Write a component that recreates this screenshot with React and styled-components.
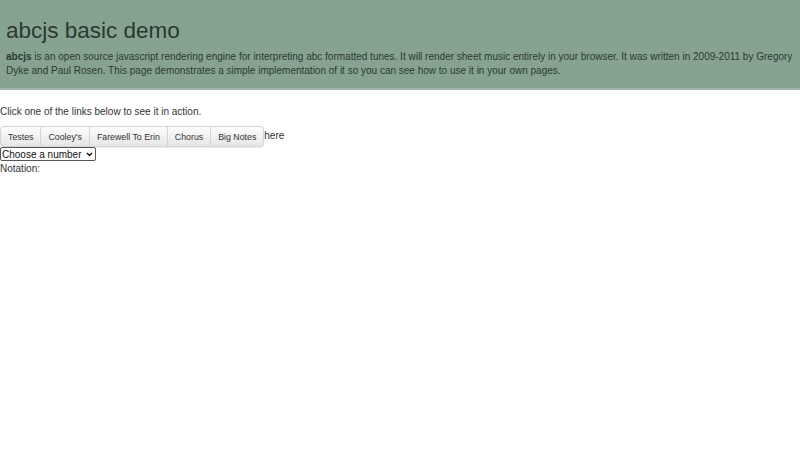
import React from "react";
import styled, { createGlobalStyle } from "styled-components";

const Global = createGlobalStyle`
  html, body { margin: 0; padding: 0; background: #fff; }
  body { font-family: "Liberation Sans", Arial, sans-serif; font-size: 10px; color: #333; }
`;

const Header = styled.header`
  background: #86a391;
  border-bottom: 2px solid #a3b8aa;
  padding: 18px 6px 11px;
  color: #2b3a30;
`;

const Title = styled.h1`
  margin: 0 0 6px;
  font-size: 22.5px;
  font-weight: normal;
  line-height: 26px;
`;

const Intro = styled.p`
  margin: 0;
  font-size: 10px;
  line-height: 13.5px;
`;

const Main = styled.main`
  padding-top: 15px;
  font-size: 10px;
  line-height: 13px;
`;

const Lead = styled.div`
  margin-bottom: 8px;
`;

const ToolRow = styled.div`
  display: flex;
  align-items: center;
`;

const Group = styled.div`
  display: flex;
  border-radius: 4px;
  box-shadow: 0 1px 1px rgba(0, 0, 0, 0.08);
`;

const TuneButton = styled.button`
  font-family: "Liberation Sans", Arial, sans-serif;
  font-size: 8.8px;
  color: #333;
  height: 21px;
  padding: 0 7px;
  background: linear-gradient(#fdfdfd, #e6e6e6);
  border: 1px solid #d4d4d4;
  border-left-width: ${(p) => (p.$first ? "1px" : "0")};
  border-radius: ${(p) => (p.$first ? "4px 0 0 4px" : p.$last ? "0 4px 4px 0" : "0")};
  cursor: pointer;
`;

const Here = styled.span`
  margin-top: -2px;
  font-size: 10px;
`;

const PickerWrap = styled.div`
  position: relative;
  display: inline-block;
  vertical-align: top;
`;

const Picker = styled.select`
  display: block;
  appearance: none;
  font-family: "Liberation Sans", Arial, sans-serif;
  font-size: 10px;
  line-height: 11px;
  height: 14px;
  padding: 0 13px 0 1px;
  border: 1px solid #555;
  border-radius: 2px;
  background: #fff;
  color: #111;
`;

const Chevron = styled.svg`
  position: absolute;
  right: 3px;
  top: 5px;
  width: 7px;
  height: 5px;
  pointer-events: none;
`;

const Notation = styled.div`
  margin-top: 1px;
`;

const tunes = ["Testes", "Cooley's", "Farewell To Erin", "Chorus", "Big Notes"];

export default function App() {
  return (
    <>
      <Global />
      <Header>
        <Title>abcjs basic demo</Title>
        <Intro>
          <b>abcjs</b> is an open source javascript rendering engine for interpreting abc formatted tunes. It will render sheet music entirely in your browser. It was written in 2009-2011 by Gregory Dyke and Paul Rosen. This page demonstrates a simple implementation of it so you can see how to use it in your own pages.
        </Intro>
      </Header>
      <Main>
        <Lead>Click one of the links below to see it in action.</Lead>
        <ToolRow>
          <Group>
            {tunes.map((t, i) => (
              <TuneButton key={t} $first={i === 0} $last={i === tunes.length - 1}>
                {t}
              </TuneButton>
            ))}
          </Group>
          <Here>here</Here>
        </ToolRow>
        <PickerWrap>
          <Picker defaultValue="">
            <option value="">Choose a number</option>
          </Picker>
          <Chevron viewBox="0 0 7 5">
            <path d="M1 1l2.5 2.5L6 1" fill="none" stroke="#111" strokeWidth="1.4" />
          </Chevron>
        </PickerWrap>
        <Notation>Notation:</Notation>
      </Main>
    </>
  );
}
